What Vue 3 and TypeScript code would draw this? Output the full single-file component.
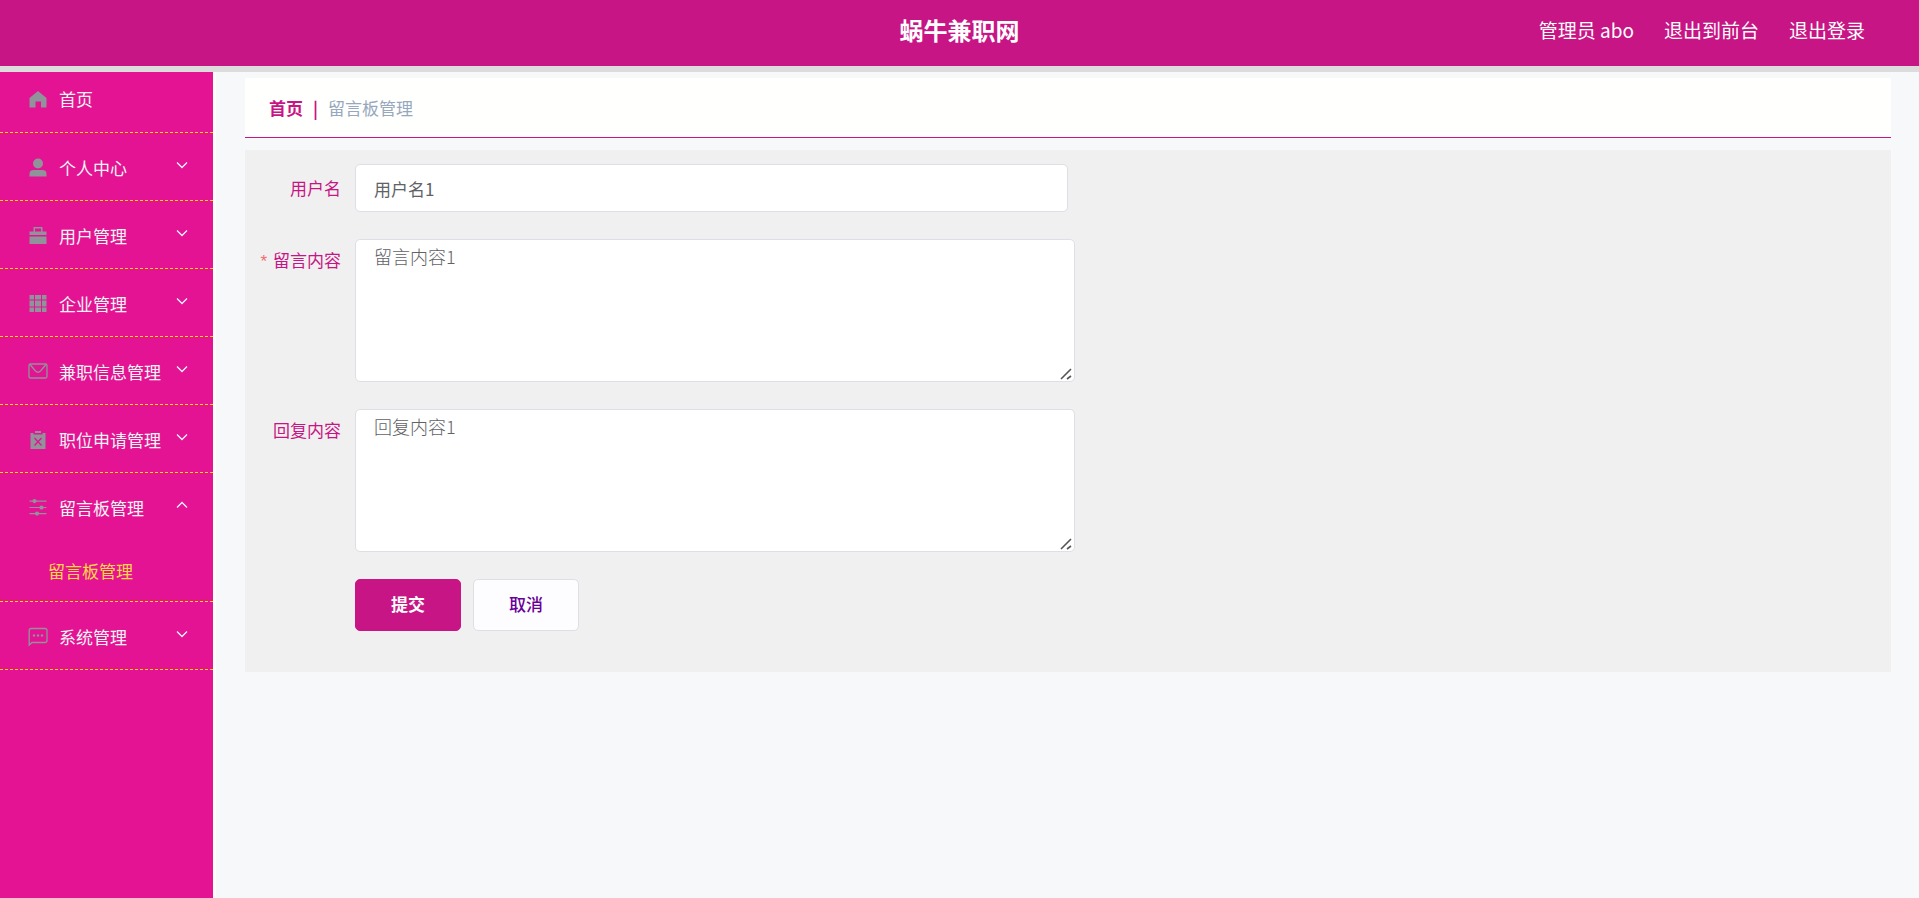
<script setup lang="ts">
import { ref } from 'vue'

interface MenuItem {
  label: string
  icon: string
  children?: string[]
}

const menu: MenuItem[] = [
  { label: '首页', icon: 'home' },
  { label: '个人中心', icon: 'user', children: ['个人信息'] },
  { label: '用户管理', icon: 'case', children: ['用户管理'] },
  { label: '企业管理', icon: 'grid', children: ['企业管理'] },
  { label: '兼职信息管理', icon: 'mail', children: ['兼职信息管理'] },
  { label: '职位申请管理', icon: 'clip', children: ['职位申请管理'] },
  { label: '留言板管理', icon: 'sliders', children: ['留言板管理'] },
  { label: '系统管理', icon: 'chat', children: ['系统管理'] },
]

const opened = ref('留言板管理')
const username = ref('用户名1')
const message = ref('留言内容1')
const reply = ref('回复内容1')

function toggle(item: MenuItem) {
  if (item.children) opened.value = opened.value === item.label ? '' : item.label
}
</script>

<template>
  <div class="page">
    <header class="top">
      <h1>蜗牛兼职网</h1>
      <nav class="account">
        <span>管理员 abo</span>
        <a href="#">退出到前台</a>
        <a href="#">退出登录</a>
      </nav>
    </header>
    <div class="body">
      <aside class="side">
        <ul>
          <li v-for="item in menu" :key="item.label">
            <button type="button" class="entry" @click="toggle(item)">
              <svg class="icon" viewBox="0 0 20 20" aria-hidden="true">
                <path v-if="item.icon === 'home'" d="M10 2 18.500 9V18.500H13V12.500H7.500V18.500H1.500V9Z" fill="currentColor" />
                <g v-else-if="item.icon === 'user'" fill="currentColor">
                  <circle cx="10" cy="5.500" r="5" />
                  <path d="M1.500 18.500V16Q1.500 12 5.500 12H14.500Q18.500 12 18.500 16V18.500Z" />
                </g>
                <g v-else-if="item.icon === 'case'" fill="currentColor">
                  <path d="M5.500 5.500V1H14.500V5.500H18.500V9H1.500V5.500ZM7 5.500H13V2.500H7Z" fill-rule="evenodd" />
                  <path d="M1.500 10.500H18.500V18H1.500Z" />
                </g>
                <path v-else-if="item.icon === 'grid'" fill="currentColor" d="M1.500 1H6V5.500H1.500ZM7 1H13V5.500H7ZM14 1H18.500V5.500H14ZM1.500 6.500H6V12.500H1.500ZM7 6.500H13V12.500H7ZM14 6.500H18.500V12.500H14ZM1.500 13.500H6V18H1.500ZM7 13.500H13V18H7ZM14 13.500H18.500V18H14Z" />
                <g v-else-if="item.icon === 'mail'" fill="none" stroke="currentColor" stroke-width="1.300">
                  <rect x="1" y="2" width="18" height="14" rx="1.500" />
                  <path d="M2 2.500 7.500 9Q10 11.500 12.500 9L18 2.500" />
                </g>
                <g v-else-if="item.icon === 'clip'">
                  <path fill="currentColor" d="M7 1H13V3H7ZM2.500 3H5.500V4.500H14.500V3H17.500V19H2.500Z" />
                  <path d="M6.500 8 13.500 15.500M13.500 8 6.500 15.500" class="cross" />
                </g>
                <g v-else-if="item.icon === 'sliders'" fill="currentColor">
                  <path d="M1.500 2.500H18.500V3.700H1.500ZM1.500 8.900H18.500V10.100H1.500ZM1.500 15H18.500V16.200H1.500Z" />
                  <circle cx="6.500" cy="3.100" r="2.100" />
                  <circle cx="13.500" cy="9.500" r="2.100" />
                  <circle cx="9" cy="15.600" r="2.100" />
                </g>
                <g v-else>
                  <path fill="none" stroke="currentColor" stroke-width="1.300" d="M1.200 18V3.500Q1.200 1.500 3.200 1.500H17Q19 1.500 19 3.500V13.500Q19 15.500 17 15.500H4Z" />
                  <g fill="currentColor"><circle cx="6" cy="8.500" r="1.200" /><circle cx="10" cy="8.500" r="1.200" /><circle cx="14" cy="8.500" r="1.200" /></g>
                </g>
              </svg>
              <span>{{ item.label }}</span>
              <svg v-if="item.children" class="arrow" viewBox="0 0 12 12" aria-hidden="true">
                <path :d="opened === item.label ? 'M1 8.500 6 3.500 11 8.500' : 'M1 3.500 6 8.500 11 3.500'" />
              </svg>
            </button>
            <div v-if="item.children && opened === item.label" class="sub">
              <a v-for="child in item.children" :key="child" href="#">{{ child }}</a>
            </div>
          </li>
        </ul>
      </aside>
      <main>
        <nav class="crumbs">
          <a href="#">首页</a>
          <b>|</b>
          <span>留言板管理</span>
        </nav>
        <form @submit.prevent>
          <div class="row">
            <label for="username">用户名</label>
            <input id="username" v-model="username" type="text" />
          </div>
          <div class="row">
            <label for="message"><i>*</i>留言内容</label>
            <textarea id="message" v-model="message"></textarea>
          </div>
          <div class="row">
            <label for="reply">回复内容</label>
            <textarea id="reply" v-model="reply"></textarea>
          </div>
          <div class="actions">
            <button type="submit" class="submit">提交</button>
            <button type="button" class="cancel">取消</button>
          </div>
        </form>
      </main>
    </div>
  </div>
</template>

<style>
body {
  margin: 0;
}
</style>

<style scoped>
.page {
  display: flex;
  flex-direction: column;
  min-height: 100vh;
  background: #f7f8fa;
  font-family: "Noto Sans CJK SC", sans-serif;
  font-size: 17px;
  line-height: 24px;
}
.page * {
  box-sizing: border-box;
}
a {
  color: inherit;
  text-decoration: none;
}
button,
input,
textarea {
  font: inherit;
}
.top {
  display: grid;
  grid-template-columns: 1fr auto 1fr;
  padding: 15px 54px 21px;
  border-bottom: 6px solid #dcdcdc;
  background: #c71585;
  color: #fff;
}
h1 {
  grid-column: 2;
  margin: 0;
  font-size: 24px;
  line-height: 30px;
}
.account {
  display: flex;
  justify-content: flex-end;
  gap: 30px;
  font-size: 19px;
  line-height: 30px;
}
.body {
  display: flex;
  flex: 1;
}
.side {
  flex: none;
  width: 216px;
  border-right: 3px solid #fdfdfe;
  background: #e31394;
  color: #f5f5f5;
}
ul {
  margin: 0;
  padding: 0;
  list-style: none;
}
li {
  border-bottom: 1px dashed #ffd700;
}
.entry {
  display: flex;
  align-items: center;
  width: 100%;
  height: 67px;
  padding: 2px 25px 0 28px;
  border: 0;
  background: none;
  color: inherit;
  text-align: left;
}
li:first-child .entry {
  height: 60px;
  padding: 0 25px 6px 28px;
}
.icon {
  width: 20px;
  height: 20px;
  margin-right: 11px;
  color: #909399;
}
.cross {
  fill: none;
  stroke: #e31394;
  stroke-width: 1.3;
}
.arrow {
  width: 12px;
  height: 12px;
  margin: 0 0 6px auto;
  fill: none;
  stroke: #f5f5f5;
  stroke-width: 1.3;
}
.sub {
  padding: 19px 0 18px 48px;
  color: #ffd740;
}
.sub a {
  display: block;
}
main {
  flex: 1;
  min-width: 0;
  padding: 6px 28px 0 29px;
}
.crumbs {
  display: flex;
  align-items: center;
  height: 60px;
  padding: 0 24px;
  border-bottom: 1px solid #c71585;
  background: #fffffe;
  color: #97a8be;
}
.crumbs a {
  color: #c71585;
  font-weight: bold;
}
.crumbs b {
  margin: 0 10px;
  color: #c71585;
  font-weight: bold;
}
form {
  display: flex;
  flex-direction: column;
  gap: 27px;
  margin-top: 12px;
  padding: 14px 0 41px;
  background: #f0f0f0;
}
.row {
  display: flex;
}
label {
  flex: none;
  width: 110px;
  padding: 12px 14px 0 0;
  color: #c71585;
  text-align: right;
}
.row + .row label {
  padding-top: 9px;
}
label i {
  margin-right: 6px;
  color: #f56c6c;
  font-family: "Liberation Sans", sans-serif;
  font-style: normal;
}
input,
textarea {
  width: 713px;
  min-width: 0;
  border: 1px solid #dcdfe6;
  border-radius: 5px;
  background: #fff;
  color: #606266;
}
input {
  height: 48px;
  padding: 0 18px;
}
textarea {
  width: 720px;
  height: 143px;
  padding: 4px 18px;
  font-size: 18px;
  font-weight: 300;
}
textarea::-webkit-resizer {
  background: url("data:image/svg+xml,%3Csvg xmlns='http://www.w3.org/2000/svg' width='15' height='15'%3E%3Cpath d='M2 13 12 3M8 13 12 10' stroke='%23555' stroke-width='1.6'/%3E%3C/svg%3E") no-repeat;
}
.actions {
  display: flex;
  gap: 12px;
  padding-left: 110px;
}
.actions button {
  width: 106px;
  height: 52px;
  padding: 0 0 3px;
  border: 1px solid #dcdfe6;
  border-radius: 5px;
  background: #fdfdff;
  color: #6a0099;
  font-weight: 500;
}
.actions .submit {
  border-color: #c71585;
  background: #c71585;
  color: #fff;
  font-weight: bold;
}
</style>
